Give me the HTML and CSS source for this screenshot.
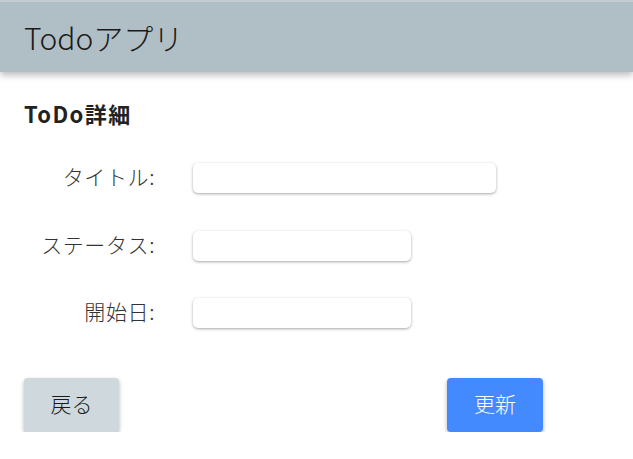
FILE: index.html
```html
<!DOCTYPE html>
<html lang="ja">
<head>
<meta charset="utf-8">
<title>Todoアプリ</title>
<link rel="stylesheet" href="styles.css">
</head>
<body>
<header class="app-bar">
  <h1 class="app-title">Todoアプリ</h1>
</header>
<main class="content">
  <h2 class="page-title">ToDo詳細</h2>
  <form class="detail-form">
    <label class="field-label" for="title">タイトル:</label>
    <input class="field-input field-wide" id="title" type="text">
    <label class="field-label" for="status">ステータス:</label>
    <input class="field-input" id="status" type="text">
    <label class="field-label" for="start">開始日:</label>
    <input class="field-input" id="start" type="text">
  </form>
  <div class="actions">
    <button class="btn btn-back" type="button">戻る</button>
    <button class="btn btn-update" type="button">更新</button>
  </div>
</main>
</body>
</html>
```

FILE: styles.css
```css
* {
  box-sizing: border-box;
}

html, body {
  margin: 0;
  padding: 0;
  background: #ffffff;
}

body {
  font-family: "Noto Sans CJK JP", "Noto Sans", sans-serif;
  color: #212121;
}

.app-bar {
  height: 72px;
  background: #b0bec5;
  border-top: 2px solid #c2ccd1;
  box-shadow: 0 3px 7px rgba(0, 0, 0, 0.28);
  display: flex;
  align-items: center;
  padding: 0 24px;
}

.app-title {
  margin: 0;
  font-size: 30px;
  font-weight: 300;
  line-height: 1;
  color: #1a1a1a;
}

.content {
  padding: 0 24px;
}

.page-title {
  margin: 26px 0 0;
  font-size: 22px;
  font-weight: 700;
  letter-spacing: 1.4px;
  line-height: 30px;
  color: #222222;
}

.detail-form {
  display: grid;
  grid-template-columns: 133px auto;
  grid-auto-rows: 30px;
  column-gap: 36px;
  row-gap: 37.5px;
  align-items: center;
  justify-items: start;
  margin-top: 35px;
}

.field-label {
  justify-self: end;
  margin-right: 2px;
  padding-bottom: 4px;
  font-size: 21px;
  font-weight: 300;
  letter-spacing: 0.6px;
  color: #333333;
  line-height: 26px;
}

.field-input {
  width: 218px;
  height: 30px;
  border: none;
  border-radius: 5px;
  background: #ffffff;
  box-shadow: 0 1px 3px rgba(0, 0, 0, 0.35);
  padding: 0 8px;
  font-size: 16px;
  font-family: inherit;
}

.field-wide {
  width: 303px;
}

.actions {
  display: flex;
  justify-content: space-between;
  width: 519px;
  margin-top: 50px;
}

.btn {
  width: 96px;
  height: 54px;
  padding: 0 0 4px;
  border: none;
  border-radius: 4px;
  font-family: inherit;
  font-size: 21px;
  font-weight: 300;
  box-shadow: 0 2px 4px rgba(0, 0, 0, 0.3);
  cursor: pointer;
}

.btn-back {
  width: 95px;
  background: #cfd8dc;
  color: #1a1a1a;
}

.btn-update {
  background: #448aff;
  color: #ffffff;
}
```
